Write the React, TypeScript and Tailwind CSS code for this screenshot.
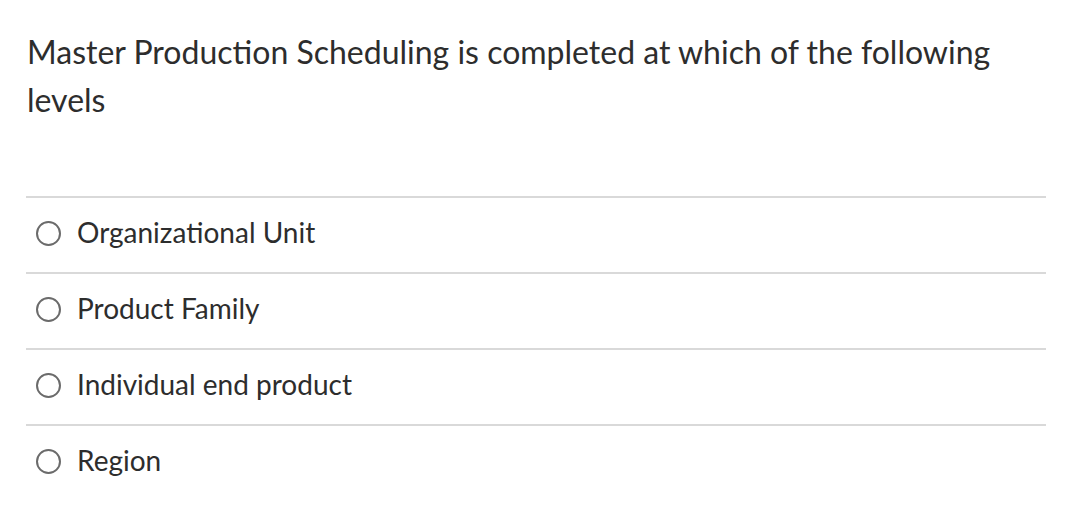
import React from "react";

const options = ["Organizational Unit", "Product Family", "Individual end product", "Region"];

export default function App() {
  return (
    <div className="w-[1070px] h-[520px] bg-white text-[#2d2d2d]" style={{ fontFamily: "Lato, 'Noto Sans', sans-serif" }}>
      <div className="pl-[27px] pr-[24px] pt-[28px]">
        <p className="text-[32px] leading-[48px] m-0">
          Master Production Scheduling is completed at which of the following levels
        </p>
      </div>
      <div className="mt-[72px] ml-[26px] w-[1020px]">
        {options.map((o) => (
          <div key={o} className="border-t-2 border-[#d9d9d9] h-[76px] flex items-center pb-[4px]">
            <div className="ml-[10px] w-[25px] h-[25px] rounded-full border-2 border-[#6b6b6b] shrink-0" />
            <span className="ml-[16px] text-[28px] mb-[3px]">{o}</span>
          </div>
        ))}
      </div>
    </div>
  );
}
